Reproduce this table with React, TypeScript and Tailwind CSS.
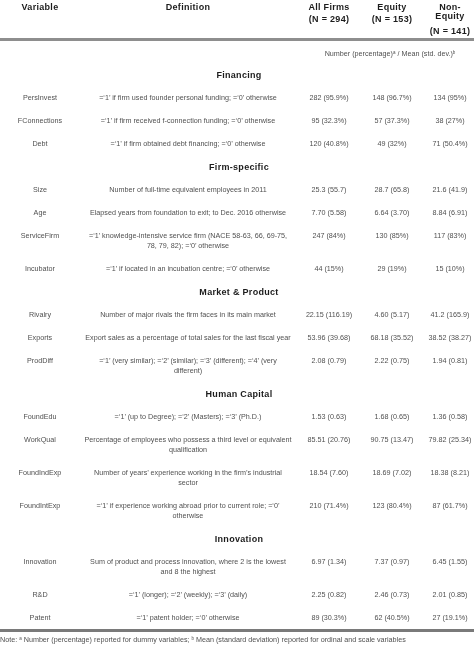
type Row = {
  name: string;
  definition: string[];
  all: string;
  equity: string;
  nonEquity: string;
};

type Section = {
  title: string;
  rows: Row[];
};

const sections: Section[] = [
  {
    title: "Financing",
    rows: [
      { name: "PersInvest", definition: ["=‘1’ if firm used founder personal funding; =‘0’ otherwise"], all: "282 (95.9%)", equity: "148 (96.7%)", nonEquity: "134 (95%)" },
      { name: "FConnections", definition: ["=‘1’ if firm received f-connection funding; =‘0’ otherwise"], all: "95 (32.3%)", equity: "57 (37.3%)", nonEquity: "38 (27%)" },
      { name: "Debt", definition: ["=‘1’ if firm obtained debt financing; =‘0’ otherwise"], all: "120 (40.8%)", equity: "49 (32%)", nonEquity: "71 (50.4%)" },
    ],
  },
  {
    title: "Firm-specific",
    rows: [
      { name: "Size", definition: ["Number of full-time equivalent employees in 2011"], all: "25.3 (55.7)", equity: "28.7 (65.8)", nonEquity: "21.6 (41.9)" },
      { name: "Age", definition: ["Elapsed years from foundation to exit; to Dec. 2016 otherwise"], all: "7.70 (5.58)", equity: "6.64 (3.70)", nonEquity: "8.84 (6.91)" },
      { name: "ServiceFirm", definition: ["=‘1’ knowledge-intensive service firm (NACE 58-63, 66, 69-75,", "78, 79, 82); =‘0’ otherwise"], all: "247 (84%)", equity: "130 (85%)", nonEquity: "117 (83%)" },
      { name: "Incubator", definition: ["=‘1’ if located in an incubation centre; =‘0’ otherwise"], all: "44 (15%)", equity: "29 (19%)", nonEquity: "15 (10%)" },
    ],
  },
  {
    title: "Market & Product",
    rows: [
      { name: "Rivalry", definition: ["Number of major rivals the firm faces in its main market"], all: "22.15 (116.19)", equity: "4.60 (5.17)", nonEquity: "41.2 (165.9)" },
      { name: "Exports", definition: ["Export sales as a percentage of total sales for the last fiscal year"], all: "53.96 (39.68)", equity: "68.18 (35.52)", nonEquity: "38.52 (38.27)" },
      { name: "ProdDiff", definition: ["=‘1’ (very similar); =‘2’ (similar); =‘3’ (different); =‘4’ (very", "different)"], all: "2.08 (0.79)", equity: "2.22 (0.75)", nonEquity: "1.94 (0.81)" },
    ],
  },
  {
    title: "Human Capital",
    rows: [
      { name: "FoundEdu", definition: ["=‘1’ (up to Degree); =‘2’ (Masters); =‘3’ (Ph.D.)"], all: "1.53 (0.63)", equity: "1.68 (0.65)", nonEquity: "1.36 (0.58)" },
      { name: "WorkQual", definition: ["Percentage of employees who possess a third level or equivalent", "qualification"], all: "85.51 (20.76)", equity: "90.75 (13.47)", nonEquity: "79.82 (25.34)" },
      { name: "FoundIndExp", definition: ["Number of years’ experience working in the firm’s industrial", "sector"], all: "18.54 (7.60)", equity: "18.69 (7.02)", nonEquity: "18.38 (8.21)" },
      { name: "FoundIntExp", definition: ["=‘1’ if experience working abroad prior to current role; =‘0’", "otherwise"], all: "210 (71.4%)", equity: "123 (80.4%)", nonEquity: "87 (61.7%)" },
    ],
  },
  {
    title: "Innovation",
    rows: [
      { name: "Innovation", definition: ["Sum of product and process innovation, where 2 is the lowest", "and 8 the highest"], all: "6.97 (1.34)", equity: "7.37 (0.97)", nonEquity: "6.45 (1.55)" },
      { name: "R&D", definition: ["=‘1’ (longer); =‘2’ (weekly); =‘3’ (daily)"], all: "2.25 (0.82)", equity: "2.46 (0.73)", nonEquity: "2.01 (0.85)" },
      { name: "Patent", definition: ["=‘1’ patent holder; =‘0’ otherwise"], all: "89 (30.3%)", equity: "62 (40.5%)", nonEquity: "27 (19.1%)" },
    ],
  },
];

const grid = "grid grid-cols-[80px_216px_66px_60px_56px]";

function DataRow({ row }: { row: Row }) {
  return (
    <div className={`${grid} items-start py-[6.5px] text-center leading-[10px] whitespace-nowrap`}>
      <div>{row.name}</div>
      <div>
        {row.definition.map((line) => (
          <div key={line}>{line}</div>
        ))}
      </div>
      <div>{row.all}</div>
      <div>{row.equity}</div>
      <div>{row.nonEquity}</div>
    </div>
  );
}

export default function App() {
  return (
    <div className="w-[474px] h-[647px] overflow-hidden bg-white font-['Liberation_Sans',Arial,sans-serif] text-[7.2px] text-[#505050] will-change-transform">
      <div className="w-[478px]">
        {/* header */}
        <div className={`${grid} h-[38px] pt-[1px] text-center text-[9px] font-bold text-[#1c1c1c] leading-[12px] tracking-[0.3px]`}>
          <div>Variable</div>
          <div>Definition</div>
          <div>
            <div>All Firms</div>
            <div>(N = 294)</div>
          </div>
          <div>
            <div>Equity</div>
            <div>(N = 153)</div>
          </div>
          <div>
            <div>Non-</div>
            <div className="-mt-[3px]">Equity</div>
            <div className="mt-[3px]">(N = 141)</div>
          </div>
        </div>
        <div className="h-[3px] bg-[#8e8e8e]" />

        <div className={`${grid} pt-[8px] pb-[4px] leading-[10px]`}>
          <div className="col-start-3 col-span-3 pl-[6px] text-center whitespace-nowrap">
            Number (percentage)<sup className="text-[4.5px]">a</sup> / Mean (std. dev.)
            <sup className="text-[4.5px]">b</sup>
          </div>
        </div>

        {sections.map((section) => (
          <div key={section.title}>
            <div className="py-[6.5px] text-center text-[9px] leading-[10px] font-bold text-[#1c1c1c] tracking-[0.3px]">
              {section.title}
            </div>
            {section.rows.map((row) => (
              <DataRow key={row.name} row={row} />
            ))}
          </div>
        ))}

        <div className="h-[3px] bg-[#7a7a7a]" />
        <div className="pt-[3px] leading-[10px] whitespace-nowrap">
          Note: <sup className="text-[4.5px]">a</sup> Number (percentage) reported for dummy variables;{" "}
          <sup className="text-[4.5px]">b</sup> Mean (standard deviation) reported for ordinal and scale variables
        </div>
      </div>
    </div>
  );
}
